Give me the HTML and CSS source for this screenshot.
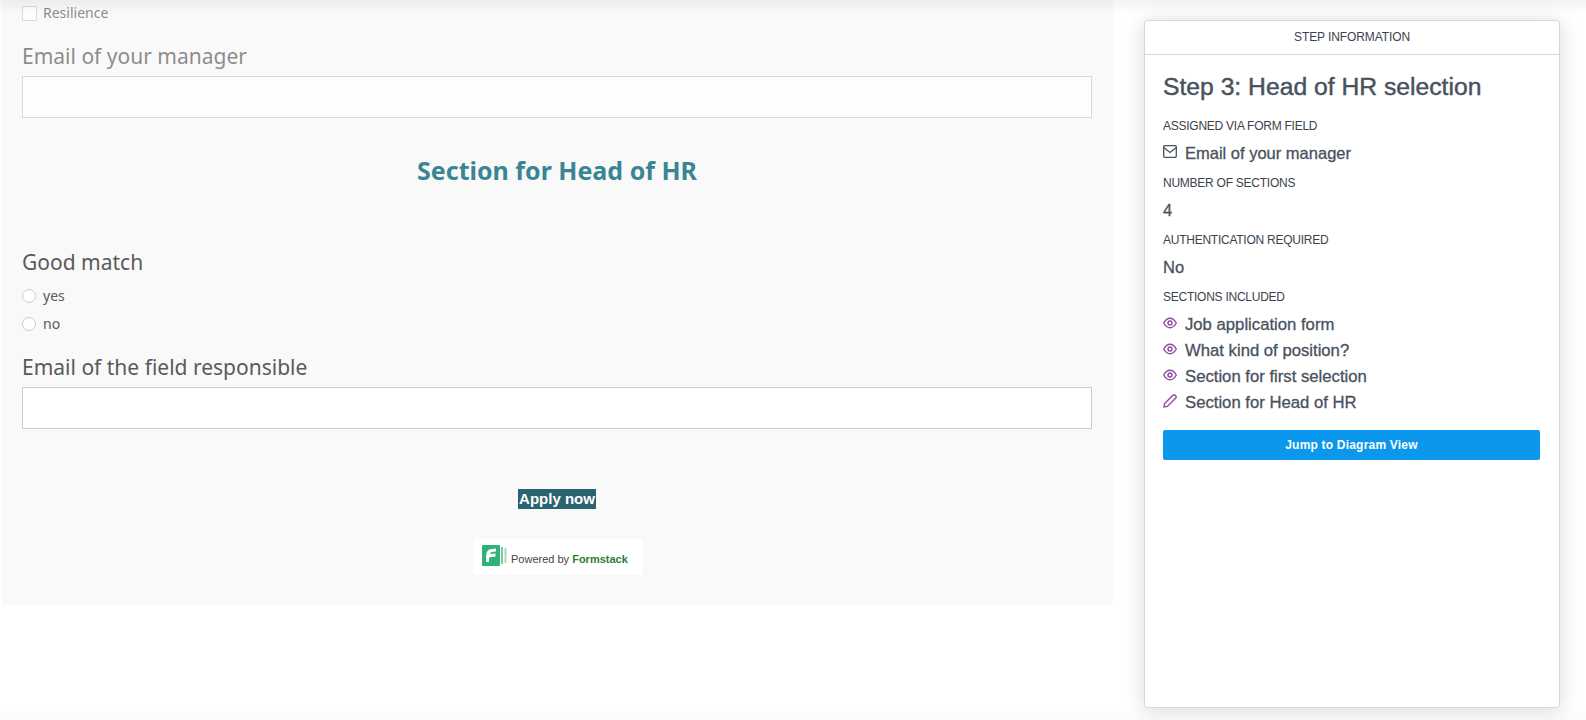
FILE: index.html
```html
<!DOCTYPE html>
<html lang="en">
<head>
<meta charset="utf-8">
<title>Step information</title>
<link rel="stylesheet" href="styles.css">
</head>
<body>
<div class="top-shade"></div>
<div class="bottom-shade"></div>
<main class="page">
  <form class="form">
    <label class="option option-check dim"><span class="box"></span>Resilience</label>
    <div class="field dim field-first">
      <div class="label">Email of your manager</div>
      <div class="input input-dim"></div>
    </div>
    <h2 class="section-title">Section for Head of HR</h2>
    <div class="label label-match">Good match</div>
    <label class="option option-yes"><span class="radio"></span>yes</label>
    <label class="option option-no"><span class="radio"></span>no</label>
    <div class="field field-last">
      <div class="label">Email of the field responsible</div>
      <div class="input"></div>
    </div>
    <div class="submit-row"><span class="submit">Apply now</span></div>
    <div class="powered-row">
      <div class="powered">
        <svg class="fs-logo" width="25" height="21" viewBox="0 0 25 21">
          <rect x="0" y="0" width="18" height="21" rx="1" fill="#2fb27a"/>
          <rect x="19" y="2" width="2" height="17" fill="#7ccaa6"/>
          <rect x="22.5" y="3" width="2" height="15" fill="#a5dcc2"/>
          <path d="M4 17C4 12 4 9 5 7C6 4.500 8 4 14 3.500V6.500C10 6.800 8.500 7 8 9C10 9 12 8.800 13.500 8.500V11.500C11.500 12 9.500 12 7.500 12.200C7 13.500 7 15 7 17z" fill="#fff"/>
        </svg>
        <span class="powered-text">Powered by <b>Formstack</b></span>
      </div>
    </div>
  </form>
  <aside class="card">
    <header class="card-head">STEP INFORMATION</header>
    <div class="card-body">
      <h1 class="step-title">Step 3: Head of HR selection</h1>
      <div class="meta">ASSIGNED VIA FORM FIELD</div>
      <div class="value">
        <svg class="ico" width="14" height="14" viewBox="0 0 14 14" fill="none" stroke="#48525e" stroke-width="1.300"><rect x=".7" y=".7" width="12.600" height="11.600" rx="1"/><path d="M.7 2.500 7 7.500l6.300-5"/></svg>
        Email of your manager
      </div>
      <div class="meta">NUMBER OF SECTIONS</div>
      <div class="value">4</div>
      <div class="meta">AUTHENTICATION REQUIRED</div>
      <div class="value">No</div>
      <div class="meta">SECTIONS INCLUDED</div>
      <ul class="sections">
        <li><svg class="ico" width="14" height="12" viewBox="0 0 14 12" fill="none" stroke="#8e4a9e" stroke-width="1.400"><path d="M.7 6C2.500 2.800 4.600 1.200 7 1.200S11.500 2.800 13.300 6C11.500 9.200 9.400 10.800 7 10.800S2.500 9.200.7 6z"/><circle cx="7" cy="6" r="2"/></svg>Job application form</li>
        <li><svg class="ico" width="14" height="12" viewBox="0 0 14 12" fill="none" stroke="#8e4a9e" stroke-width="1.400"><path d="M.7 6C2.500 2.800 4.600 1.200 7 1.200S11.500 2.800 13.300 6C11.500 9.200 9.400 10.800 7 10.800S2.500 9.200.7 6z"/><circle cx="7" cy="6" r="2"/></svg>What kind of position?</li>
        <li><svg class="ico" width="14" height="12" viewBox="0 0 14 12" fill="none" stroke="#8e4a9e" stroke-width="1.400"><path d="M.7 6C2.500 2.800 4.600 1.200 7 1.200S11.500 2.800 13.300 6C11.500 9.200 9.400 10.800 7 10.800S2.500 9.200.7 6z"/><circle cx="7" cy="6" r="2"/></svg>Section for first selection</li>
        <li><svg class="ico" width="14" height="14" viewBox="0 0 14 14" fill="none" stroke="#8e4a9e" stroke-width="1.400"><path d="M1 13l.6-3.400L10 1.200c.6-.6 1.500-.6 2 0l.8.800c.6.600.6 1.400 0 2L4.400 12.400z"/></svg>Section for Head of HR</li>
      </ul>
      <div class="jump">Jump to Diagram View</div>
    </div>
  </aside>
</main>
</body>
</html>
```
FILE: styles.css
```css
* { box-sizing: border-box; }
html, body { margin: 0; height: 720px; overflow: hidden; background: #fff; }
body { position: relative; font-family: "Noto Sans", "Open Sans", sans-serif; color: #5a5a5a; }

.top-shade {
  position: absolute; left: 0; right: 0; top: 0; height: 14px; z-index: 2; pointer-events: none;
  background: linear-gradient(to bottom, rgba(0,0,0,.05), rgba(0,0,0,0));
}
.bottom-shade {
  position: absolute; left: 0; right: 0; bottom: 0; height: 14px; pointer-events: none;
  background: linear-gradient(to top, rgba(0,0,0,.015), rgba(0,0,0,0));
}

.page { display: flex; align-items: flex-start; padding-left: 2px; }

.form {
  display: flex; flex-direction: column;
  width: 1111px; height: 605px; padding: 0 21px 0 20px;
  background: #f9f9f9;
}
.dim { opacity: .68; }

.option { display: flex; align-items: center; gap: 6px; font-size: 14px; line-height: 20px; color: #5a5a5a; }
.option-check { margin-top: 3px; }
.option-yes { margin-top: 10px; }
.option-no { margin-top: 8px; }
.box { width: 15px; height: 15px; background: #fff; border: 1px solid #ccc; border-radius: 1px; }
.radio { width: 14px; height: 14px; margin-right: 1px; background: #fff; border: 1px solid #ccc; border-radius: 50%; }

.label { font-size: 21px; line-height: 28px; color: #5a5a5a; }
.field-first { margin-top: 19px; }
.field-last { margin-top: 19px; }
.input { height: 42px; margin-top: 6px; background: #fff; border: 1px solid #cbcbcb; }

.section-title {
  margin: 35px 0 61px; text-align: center;
  font-size: 25px; line-height: 34px; font-weight: 700; color: #3a8594;
}

.submit-row { display: flex; justify-content: center; margin-top: 60px; }
.submit {
  padding: 0 1.500px; height: 20px;
  font-family: "Liberation Sans", Arial, sans-serif; font-size: 15px; line-height: 20px; font-weight: 700;
  color: #fff; background: #2a6470;
}
.powered-row { display: flex; justify-content: center; margin-top: 30px; padding-left: 2px; }
.powered {
  display: flex; align-items: center; gap: 4px;
  width: 170px; height: 36px; padding-left: 9px;
  background: #fff; border-radius: 3px;
  font-family: "Liberation Sans", Arial, sans-serif; font-size: 11px; color: #444;
}
.powered b { color: #2e7d32; }
.powered-text { margin-top: 3px; }
.fs-logo { margin-top: -4px; flex: none; }

.card {
  width: 416px; height: 688px; margin: 20px 0 0 31px;
  background: #fff; border: 1px solid #d6d6d6; border-radius: 3px;
  box-shadow: 0 2px 20px rgba(0,0,0,.16);
  font-family: "Liberation Sans", Arial, sans-serif; color: #48525e;
}
.card-head {
  height: 34px; line-height: 32px; text-align: center;
  font-size: 12px; letter-spacing: -.1px; color: #3a434d; border-bottom: 1px solid #d6d6d6;
}
.card-body { padding: 17px 19px 17px 18px; }
.step-title { margin: 0; font-size: 24.700px; line-height: 30px; font-weight: 400; -webkit-text-stroke: .45px #48525e; }
.meta { margin-top: 13px; font-size: 12px; letter-spacing: -.25px; line-height: 14px; color: #3a434d; }
.step-title + .meta { margin-top: 17px; }
.value { display: flex; align-items: center; gap: 8px; margin-top: 10px; height: 20px; font-size: 16.500px; line-height: 20px; -webkit-text-stroke: .3px #48525e; }
.value .ico { margin-top: -3px; }
.sections { list-style: none; margin: 8px 0 0; padding: 0; }
.sections li { display: flex; align-items: center; gap: 8px; height: 26px; font-size: 16.700px; -webkit-text-stroke: .3px #48525e; }
.sections .ico { margin-top: -5px; flex: none; }
.jump {
  height: 30px; margin-top: 14px; line-height: 30px; text-align: center;
  background: #0a97ec; color: #fff; border-radius: 2px;
  font-size: 12px; font-weight: 700; letter-spacing: .2px;
}
```
